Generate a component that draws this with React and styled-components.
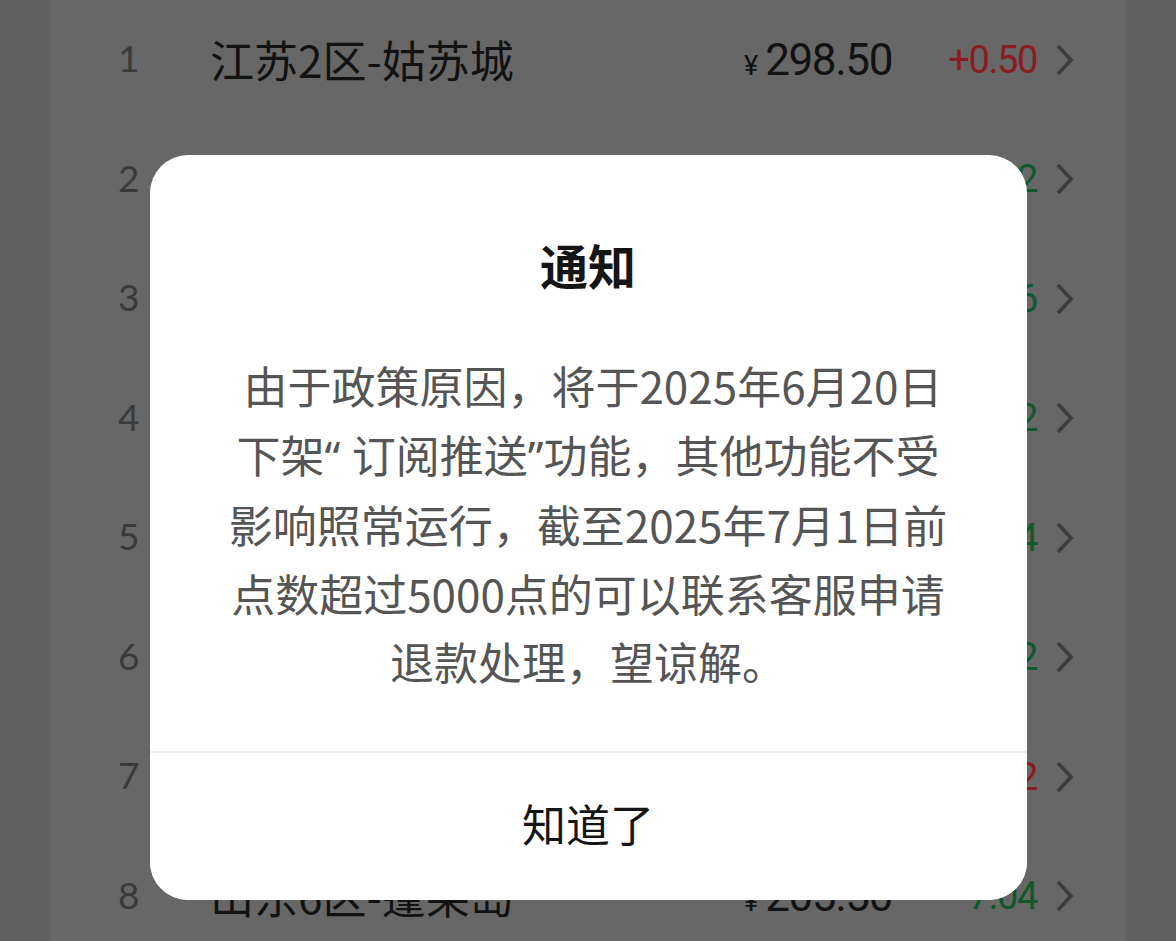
import React from 'react';
import styled, { createGlobalStyle } from 'styled-components';

const GlobalStyle = createGlobalStyle`
  html, body {
    margin: 0;
    padding: 0;
    background: #616161;
  }
  body {
    font-family: "Noto Sans CJK SC", "Noto Sans", sans-serif;
  }
`;

const rows = [
  { no: 1, name: '江苏2区-姑苏城', price: '298.50', change: '+0.50', up: true },
  { no: 2, name: '浙江1区-西子湖', price: '312.00', change: '-1.02', up: false },
  { no: 3, name: '广东3区-珠江畔', price: '276.80', change: '-0.36', up: false },
  { no: 4, name: '四川2区-锦官城', price: '254.20', change: '-2.12', up: false },
  { no: 5, name: '湖北1区-黄鹤楼', price: '241.60', change: '-0.84', up: false },
  { no: 6, name: '福建2区-鼓浪屿', price: '233.40', change: '-1.22', up: false },
  { no: 7, name: '河南4区-少林寺', price: '221.90', change: '+0.72', up: true },
  { no: 8, name: '山东6区-蓬莱岛', price: '205.50', change: '-7.04', up: false },
];

const Page = styled.div`
  position: relative;
  height: 941px;
  overflow: hidden;
  display: flex;
  justify-content: center;
`;

const Panel = styled.div`
  width: 1076px;
  background: #676767;
  display: flex;
  flex-direction: column;
`;

const Row = styled.div`
  height: 119.5px;
  flex-shrink: 0;
  display: grid;
  grid-template-columns: 92px 1fr auto 163px 71px;
  align-items: center;
  padding-left: 68px;
  box-sizing: border-box;
`;

const No = styled.span`
  font-family: "Lato", "Open Sans", sans-serif;
  font-size: 37px;
  color: #3a3a3a;
  padding-bottom: 4px;
`;

const Name = styled.span`
  font-size: 44px;
  color: #121212;
  padding-bottom: 2px;
`;

const Price = styled.span`
  font-family: "Roboto", sans-serif;
  font-size: 44px;
  letter-spacing: -1.4px;
  color: #121212;
  display: flex;
  align-items: baseline;
  gap: 7px;
`;

const Yen = styled.span`
  font-size: 27px;
  letter-spacing: 0;
`;

const Change = styled.span`
  font-family: "Roboto", sans-serif;
  font-size: 38px;
  letter-spacing: -1.4px;
  text-align: right;
  padding-right: 18px;
  color: ${(p) => (p.$up ? '#8a1c20' : '#10592c')};
`;

const Chevron = styled.svg`
  width: 20px;
  height: 34px;
`;

const Overlay = styled.div`
  position: absolute;
  inset: 0;
  display: flex;
  justify-content: center;
  padding-top: 155px;
  box-sizing: border-box;
`;

const Dialog = styled.div`
  width: 877px;
  height: 745px;
  background: #fff;
  border-radius: 38px;
  display: flex;
  flex-direction: column;
  overflow: hidden;
`;

const Title = styled.h2`
  margin: 0;
  padding-top: 78px;
  font-size: 48px;
  line-height: 62px;
  font-weight: 700;
  color: #151515;
  text-align: center;
`;

const Body = styled.p`
  margin: 0;
  padding: 56px 40px 0;
  font-size: 44px;
  line-height: 68.5px;
  color: #555;
  text-align: center;
  white-space: pre;
  flex: 1;
`;

const Quote = styled.span`
  font-family: "Noto Sans", sans-serif;
`;

const Action = styled.button`
  height: 149px;
  border: none;
  border-top: 2px solid #efefef;
  background: #fff;
  font-family: "Noto Sans CJK SC", sans-serif;
  font-size: 44px;
  color: #151515;
  padding-bottom: 8px;
  cursor: pointer;
`;

const ChevronIcon = () => (
  <Chevron viewBox="0 0 20 34">
    <path d="M3 3 L16 17 L3 31" fill="none" stroke="#3d3d3d" strokeWidth="3.6" />
  </Chevron>
);

export default function App() {
  return (
    <>
      <GlobalStyle />
      <Page>
        <Panel>
          {rows.map((r) => (
            <Row key={r.no}>
              <No>{r.no}</No>
              <Name>{r.name}</Name>
              <Price>
                <Yen>¥</Yen>
                {r.price}
              </Price>
              <Change $up={r.up}>{r.change}</Change>
              <ChevronIcon />
            </Row>
          ))}
        </Panel>
        <Overlay>
          <Dialog>
            <Title>通知</Title>
            <Body>
              {' 由于政策原因，将于2025年6月20日\n下架'}
              <Quote>“ </Quote>
              {'订阅推送'}
              <Quote>”</Quote>
              {'功能，其他功能不受\n影响照常运行，截至2025年7月1日前\n点数超过5000点的可以联系客服申请\n退款处理，望谅解。'}
            </Body>
            <Action type="button">知道了</Action>
          </Dialog>
        </Overlay>
      </Page>
    </>
  );
}
